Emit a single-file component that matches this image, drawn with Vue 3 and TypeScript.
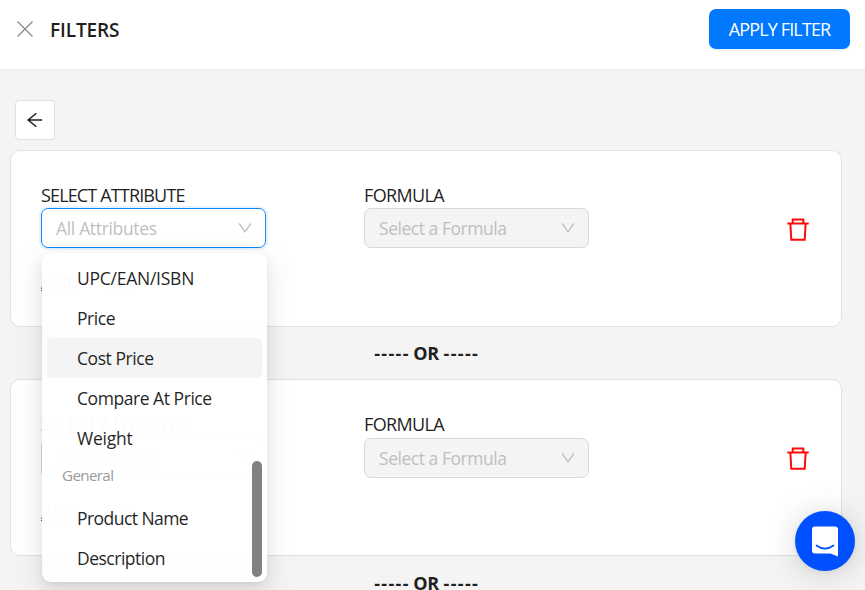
<script setup lang="ts">
interface Option {
  label: string
  track: string
  group?: boolean
  active?: boolean
}

const options: Option[] = [
  { label: 'UPC/EAN/ISBN', track: 't-upc' },
  { label: 'Price', track: 't-price' },
  { label: 'Cost Price', track: 't-price', active: true },
  { label: 'Compare At Price', track: 't-compare' },
  { label: 'Weight', track: 't-weight' },
  { label: 'General', track: 't-general', group: true },
  { label: 'Product Name', track: 't-product' },
  { label: 'Description', track: 't-description' },
]

const rules = [
  { id: 1, open: true },
  { id: 2, open: false },
]
</script>

<template>
  <div class="page">
    <header class="header">
      <svg class="close" viewBox="0 0 18 18"><path d="M1.5 1.5 16.5 16.5M16.5 1.5 1.5 16.5" /></svg>
      <h1 class="title"><span>FILTERS</span></h1>
      <button class="apply"><span>APPLY FILTER</span></button>
    </header>

    <main class="content">
      <button class="back">
        <svg viewBox="0 0 16 16"><path d="M15.2 8H1.2M9.3 1.2 1.2 8l8.1 6.8" /></svg>
      </button>

      <template v-for="rule in rules" :key="rule.id">
        <section class="card" :class="{ collapsed: !rule.open }">
          <div class="row">
            <div class="field">
              <label><span class="t-select">SELECT ATTRIBUTE</span></label>
              <div class="select" :class="{ focused: rule.open }">
                <span class="t-all">All Attributes</span>
                <svg class="chevron" viewBox="0 0 14 12"><path d="M1.2 1.5 7 9.8l5.8-8.3" /></svg>
              </div>
              <div v-if="rule.open" class="dropdown">
                <div
                  v-for="o in options"
                  :key="o.label"
                  class="option"
                  :class="{ group: o.group, active: o.active }"
                ><span :class="o.track">{{ o.label }}</span></div>
                <div class="thumb"></div>
              </div>
            </div>
            <div class="field">
              <label><span class="t-formula">FORMULA</span></label>
              <div class="select disabled">
                <span class="t-placeholder">Select a Formula</span>
                <svg class="chevron" viewBox="0 0 14 12"><path d="M1.2 1.5 7 9.8l5.8-8.3" /></svg>
              </div>
            </div>
            <svg class="trash" viewBox="0 0 22 24">
              <path d="M.3 5.5h21.400M5.700 5V1.600h10.600V5M3.400 6l.9 15.700h13.400l.9-15.700" />
            </svg>
          </div>
          <div class="join"><a>AND</a><a>OR</a></div>
        </section>
        <div class="or"><span class="dash">-----</span> <span>OR</span> <span class="dash">-----</span></div>
      </template>
    </main>

    <button class="chat">
      <svg viewBox="0 0 28 31">
        <path d="M4 .5h20a3 3 0 0 1 3 3V30.5l-7.5-3H4a3 3 0 0 1-3-3v-21a3 3 0 0 1 3-3z" fill="#fff" />
        <path d="M5.5 19.5q8.5 6.2 17 0" fill="none" stroke="#0050ff" stroke-width="1.7" stroke-linecap="round" />
      </svg>
    </button>
  </div>
</template>

<style>
body {
  margin: 0;
  overflow: hidden;
}
</style>

<style scoped>
.page {
  box-sizing: border-box;
  width: 865px;
  height: 590px;
  overflow: hidden;
  background: #f4f4f4;
  color: #1f1f1f;
  font: 18px/28px 'Open Sans', 'Noto Sans', sans-serif;
}
.page * { box-sizing: border-box; }
span { white-space: nowrap; }
button { font: inherit; padding: 0; margin: 0; }
svg { display: block; flex: none; fill: none; }

.header {
  display: flex;
  align-items: center;
  height: 70px;
  padding: 0 15px 12px 16px;
  background: #fff;
  border-bottom: 1px solid #ececec;
}
.close { width: 18px; height: 18px; stroke: #8c8c8c; stroke-width: 1.4; }
.title {
  flex: 1;
  margin: 2px 0 0 16px;
  font-size: 19px;
  line-height: 28px;
  font-weight: 600;
  letter-spacing: -0.1px;
}
.apply {
  width: 141px;
  height: 40px;
  border: 0;
  border-radius: 7px;
  background: #0079ff;
  color: #fff;
  box-shadow: 0 2px 0 rgba(5, 145, 255, 0.08);
  letter-spacing: -0.85px;
}

.content { padding: 30px 23px 0 10px; }
.back {
  display: flex;
  align-items: center;
  justify-content: center;
  width: 40px;
  height: 40px;
  margin: 0 0 10px 5px;
  background: #fff;
  border: 1px solid #dce1e6;
  border-radius: 4px;
}
.back svg { width: 16px; height: 16px; stroke: #1f1f1f; stroke-width: 1.5; }

.card {
  height: 177px;
  padding: 30px;
  background: #fff;
  border: 1px solid #e2e2e2;
  border-radius: 10px;
}
.row { display: flex; gap: 98px; }
.field { position: relative; width: 225px; }
.field label { display: block; height: 27px; line-height: 28px; }
.collapsed .field label { height: 28px; }
.select {
  display: flex;
  align-items: center;
  justify-content: space-between;
  height: 40px;
  padding: 0 13px 0 14px;
  border: 1px solid #d9d9d9;
  border-radius: 7px;
  color: #bfbfbf;
  font-size: 17.5px;
}
.select.focused { border-color: #1488f5; box-shadow: 0 0 0 2px rgba(5, 145, 255, 0.1); }
.select.disabled { background: #f4f4f4; }
.chevron { width: 14px; height: 12px; stroke: #bfbfbf; stroke-width: 1.4; }
.trash {
  width: 22px;
  height: 24px;
  margin: 37px 0 0 100px;
  stroke: #ff0808;
  stroke-width: 2;
}
.join { display: flex; gap: 32px; margin-top: 20px; }
.join a { color: #5b3fc4; font-weight: 600; letter-spacing: -0.5px; text-decoration: underline; }
.or {
  height: 52px;
  text-align: center;
  line-height: 52px;
  font-weight: 700;
}
.collapsed + .or { line-height: 54px; }
.or span { letter-spacing: -0.3px; }
.or .dash { letter-spacing: 1.35px; margin-right: -1.35px; }

.dropdown {
  position: absolute;
  z-index: 2;
  left: 1px;
  top: 72px;
  width: 225px;
  height: 329px;
  padding: 5px;
  background: #fff;
  border-radius: 9px;
  opacity: 0.985;
  box-shadow: 0 6px 16px rgba(0, 0, 0, 0.08), 0 3px 6px -4px rgba(0, 0, 0, 0.12), 0 9px 28px 8px rgba(0, 0, 0, 0.05);
}
.option {
  height: 40px;
  padding-left: 30px;
  line-height: 41px;
  border-radius: 5px;
  font-size: 17.5px;
}
.option.active { background: #f4f4f4; }
.option.group { padding-left: 15px; line-height: 34px; font-size: 15.2px; color: #999; }
.thumb {
  position: absolute;
  right: 5px;
  bottom: 5px;
  width: 10px;
  height: 116px;
  border-radius: 5px;
  background: #808080;
}

.chat {
  position: absolute;
  left: 795px;
  top: 511px;
  display: flex;
  align-items: center;
  justify-content: center;
  width: 60px;
  height: 60px;
  border: 0;
  border-radius: 50%;
  background: #0050ff;
  box-shadow: 0 1px 6px rgba(0, 0, 0, 0.06), 0 2px 32px rgba(0, 0, 0, 0.16);
}
.chat svg { width: 28px; height: 31px; }

.t-select { letter-spacing: -0.85px; }
.t-formula { letter-spacing: -0.65px; }
.t-all { letter-spacing: -0.33px; }
.t-placeholder { letter-spacing: -0.46px; }
.t-upc { letter-spacing: -0.25px; }
.t-price { letter-spacing: -0.43px; }
.t-compare { letter-spacing: -0.45px; }
.t-weight { letter-spacing: -0.25px; }
.t-general { letter-spacing: -0.65px; }
.t-product { letter-spacing: -0.55px; }
.t-description { letter-spacing: -0.5px; }
</style>
